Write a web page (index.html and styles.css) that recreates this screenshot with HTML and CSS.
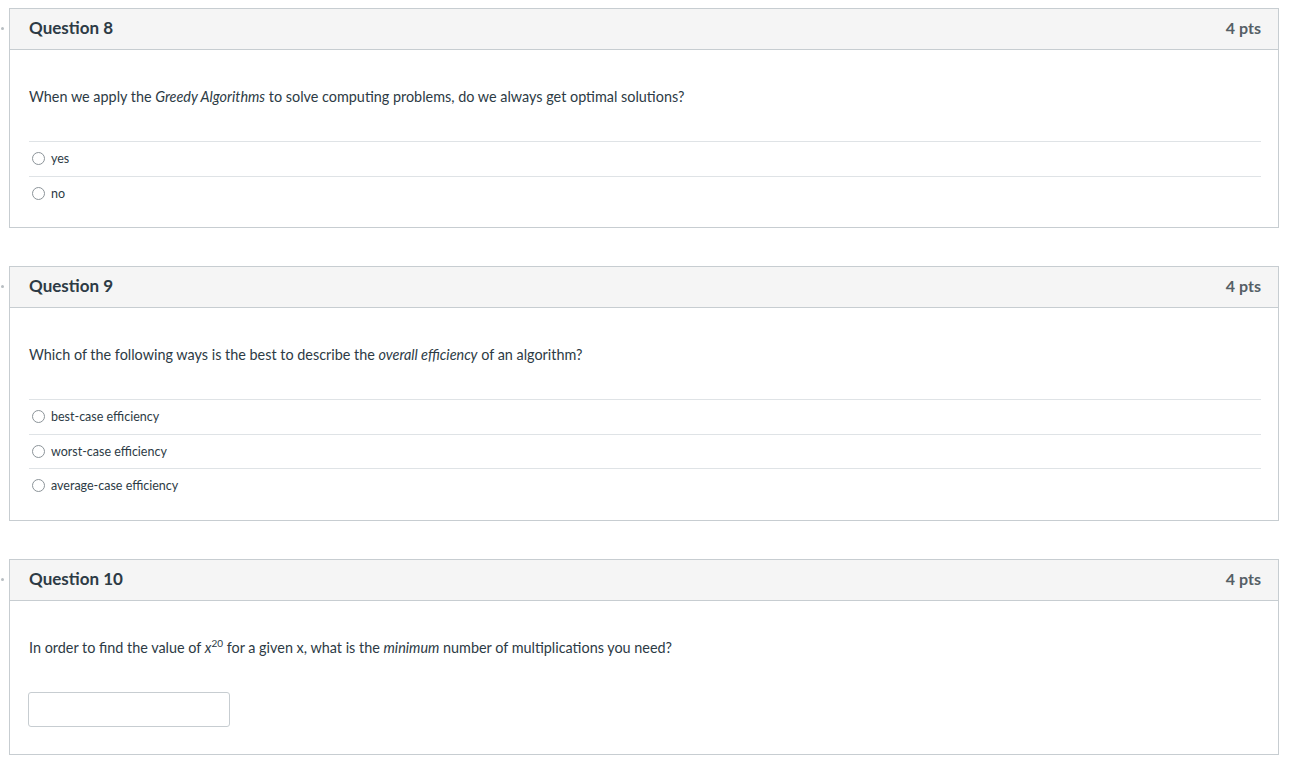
FILE: index.html
```html
<!DOCTYPE html>
<html lang="en">
  <head>
    <meta charset="UTF-8">
    <title>Quiz</title>
    <link rel="stylesheet" href="styles.css">
  </head>
  <body>
    <div class="quiz">
      <div class="question">
        <span class="marker"></span>
        <div class="question-header">
          <h2 class="question-name">Question 8</h2>
          <span class="question-points">4 pts</span>
        </div>
        <div class="question-body">
          <p class="question-text">When we apply the <em>Greedy Algorithms</em> to solve computing problems, do we always get optimal solutions?</p>
          <div class="answers">
            <label class="answer"><span class="radio"></span>yes</label>
            <label class="answer"><span class="radio"></span>no</label>
          </div>
        </div>
      </div>

      <div class="question">
        <span class="marker"></span>
        <div class="question-header">
          <h2 class="question-name">Question 9</h2>
          <span class="question-points">4 pts</span>
        </div>
        <div class="question-body">
          <p class="question-text">Which of the following ways is the best to describe the <em>overall efficiency</em> of an algorithm?</p>
          <div class="answers">
            <label class="answer"><span class="radio"></span>best-case efficiency</label>
            <label class="answer"><span class="radio"></span>worst-case efficiency</label>
            <label class="answer"><span class="radio"></span>average-case efficiency</label>
          </div>
        </div>
      </div>

      <div class="question">
        <span class="marker"></span>
        <div class="question-header">
          <h2 class="question-name">Question 10</h2>
          <span class="question-points">4 pts</span>
        </div>
        <div class="question-body">
          <p class="question-text">In order to find the value of <em>x</em><sup>20</sup> for a given x, what is the <em>minimum</em> number of multiplications you need?</p>
          <input type="text" class="short-answer">
        </div>
      </div>
    </div>
  </body>
</html>
```
FILE: styles.css
```css
html, body { margin: 0; padding: 0; background: #fff; }
body { font-family: Lato, "Open Sans", sans-serif; color: #2d3b45; }
.quiz { display: flex; flex-direction: column; gap: 38px; padding: 8px 29px 0 9px; }
.question { position: relative; border: 1px solid #c7cdd1; }
.marker { position: absolute; left: -9px; top: 18px; width: 3px; height: 3px; border-radius: 50%; background: #b8bec2; }
.question-header { display: flex; justify-content: space-between; align-items: center; box-sizing: border-box; height: 41px; padding: 0 17px 3px 19px; background: #f5f5f5; border-bottom: 1px solid #c7cdd1; }
.question-name { margin: 0; font-size: 17px; font-weight: bold; color: #2d3b45; }
.question-points { font-size: 16px; font-weight: bold; color: #555f66; }
.question-body { padding: 37px 17px 17px 19px; }
.question-text { margin: 0 0 34px 0; font-size: 14.4px; line-height: 20px; }
.question-text sup { font-size: 10px; line-height: 0; }
.answers { display: flex; flex-direction: column; }
.answer { display: flex; align-items: center; height: 33.5px; border-top: 1px solid #dfe3e6; font-size: 12.5px; color: #2d3b45; }
.radio { width: 11px; height: 11px; margin: 0 6px 0 3px; border: 1px solid #8c9499; border-radius: 50%; background: #fff; }
.short-answer { display: block; box-sizing: border-box; width: 202px; height: 35px; margin: 0 0 10px -1px; border: 1px solid #c7cdd1; border-radius: 3px; background: #fff; }
```
